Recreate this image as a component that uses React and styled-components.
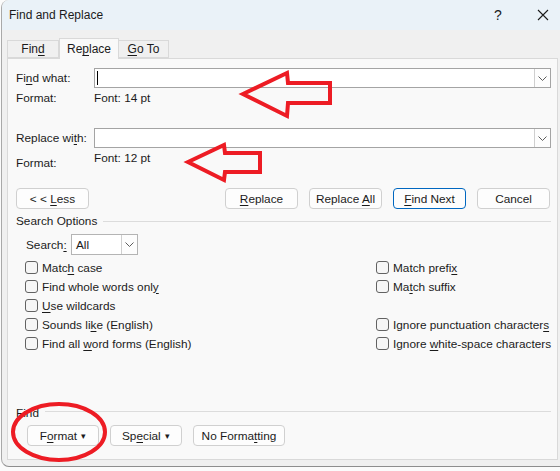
import React from "react";
import styled, { createGlobalStyle } from "styled-components";

const GlobalStyle = createGlobalStyle`
  body {
    margin: 0;
    background: #fbfbfb;
    font-family: "Liberation Sans", Arial, sans-serif;
    font-size: 11.8px;
    color: #1b1b1b;
  }
  u {
    text-decoration: underline;
    text-underline-offset: 2px;
  }
`;

const leftOptions = [
  <>Matc<u>h</u> case</>,
  <>Find whole words onl<u>y</u></>,
  <><u>U</u>se wildcards</>,
  <>Sounds li<u>k</u>e (English)</>,
  <>Find all <u>w</u>ord forms (English)</>,
];

const rightOptions = [
  <>Match prefi<u>x</u></>,
  <>Ma<u>t</u>ch suffix</>,
  null,
  <>Ignore punctuation character<u>s</u></>,
  <>Ignore <u>w</u>hite-space characters</>,
];

const Chevron = () => (
  <svg width="9" height="5" viewBox="0 0 9 5">
    <path d="M0.5 0.5 L4.5 4.5 L8.5 0.5" fill="none" stroke="#5c5c5c" strokeWidth="1" />
  </svg>
);

const Check = ({ children }) => (
  <CheckRow>
    <Box />
    <span>{children}</span>
  </CheckRow>
);

const Btn = ({ children, ...rest }) => (
  <Button {...rest}>
    <span>{children}</span>
  </Button>
);

const App = () => {
  return (
    <>
      <GlobalStyle />
      <Window>
        <TitleBar>
          <Title>Find and Replace</Title>
          <Caption>?</Caption>
          <Caption $close>
            <svg width="12" height="12" viewBox="0 0 12 12">
              <path d="M1 1 L11 11 M11 1 L1 11" stroke="#1b1b1b" strokeWidth="1.1" />
            </svg>
          </Caption>
        </TitleBar>

        <Tabs>
          <Tab $w={52}><span>Fin<u>d</u></span></Tab>
          <Tab $w={60} $active><span>Re<u>p</u>lace</span></Tab>
          <Tab $w={50}><span><u>G</u>o To</span></Tab>
        </Tabs>

        <Panel>
          <FieldRow>
            <Label>Fi<u>n</u>d what:</Label>
            <Combo>
              <Caret />
              <DropButton><Chevron /></DropButton>
            </Combo>
          </FieldRow>
          <FormatRow>
            <Label>Format:</Label>
            <span>Font: 14 pt</span>
          </FormatRow>

          <FieldRow $top={22}>
            <Label>Replace wi<u>t</u>h:</Label>
            <Combo>
              <DropButton><Chevron /></DropButton>
            </Combo>
          </FieldRow>
          <FormatRow>
            <Label $drop={5}>Format:</Label>
            <span>Font: 12 pt</span>
          </FormatRow>

          <ButtonRow>
            <Btn $w={73}>&lt; &lt; <u>L</u>ess</Btn>
            <ButtonGroup>
              <Btn $w={73}><u>R</u>eplace</Btn>
              <Btn $w={73}>Replace <u>A</u>ll</Btn>
              <Btn $w={73} $primary><u>F</u>ind Next</Btn>
              <Btn $w={73}>Cancel</Btn>
            </ButtonGroup>
          </ButtonRow>

          <Section>Search Options</Section>

          <SearchRow>
            <SearchLabel>Search<u>:</u></SearchLabel>
            <Select>
              <span>All</span>
              <DropButton $h={21}><Chevron /></DropButton>
            </Select>
          </SearchRow>

          <Options>
            {leftOptions.map((opt, i) => (
              <React.Fragment key={i}>
                <Check>{opt}</Check>
                {rightOptions[i] ? <Check>{rightOptions[i]}</Check> : <span />}
              </React.Fragment>
            ))}
          </Options>

          <Bottom>
            <Section $short>Find</Section>
            <BottomButtons>
              <Btn $w={72}>F<u>o</u>rmat <Tri>▾</Tri></Btn>
              <Btn $w={72}>Sp<u>e</u>cial <Tri>▾</Tri></Btn>
              <Btn $w={92}>No Forma<u>t</u>ting</Btn>
            </BottomButtons>
          </Bottom>
        </Panel>

        <Marks viewBox="0 0 560 471" width="560" height="471">
          <polygon
            points="243,94 287,73 288,83 330,83 330,103 288,103 287,116"
            fill="none"
            stroke="#ed1c24"
            strokeWidth="4"
            strokeLinejoin="miter"
          />
          <polygon
            points="188,162 224,145 225,153 260,153 260,172 225,172 224,180"
            fill="none"
            stroke="#ed1c24"
            strokeWidth="4"
            strokeLinejoin="miter"
          />
          <ellipse cx="59" cy="432" rx="46" ry="28" fill="none" stroke="#ed1c24" strokeWidth="4" />
        </Marks>
      </Window>
    </>
  );
};

export default App;

const Window = styled.div`
  position: relative;
  width: 559px;
  height: 467px;
  margin-left: 1px;
  background: #f0f0f0;
  border-left: 1px solid #a9a9a9;
  border-bottom: 1px solid #8e8e8e;
  border-radius: 8px 0 0 8px;
  overflow: hidden;
  box-sizing: border-box;
  display: flex;
  flex-direction: column;
`;

const TitleBar = styled.div`
  height: 30px;
  flex-shrink: 0;
  display: flex;
  align-items: center;
  background: #eaf2f8;
  margin-left: -2px;
  font-size: 12px;
`;

const Title = styled.div`
  padding-left: 9px;
  flex: 1;
`;

const Caption = styled.div`
  width: 34px;
  height: 30px;
  display: flex;
  align-items: center;
  justify-content: center;
  font-size: 14px;
  margin-right: ${(p) => (p.$close ? "0" : "11px")};
`;

const Tabs = styled.div`
  height: 28px;
  display: flex;
  align-items: flex-end;
  padding-left: 5px;
  flex-shrink: 0;
  font-size: 12px;
`;

const Tab = styled.div`
  width: ${(p) => p.$w}px;
  height: ${(p) => (p.$active ? 21 : 18)}px;
  margin-bottom: ${(p) => (p.$active ? -1 : 0)}px;
  box-sizing: border-box;
  display: flex;
  align-items: center;
  justify-content: center;
  background: ${(p) => (p.$active ? "#f9f9f9" : "#f0f0f0")};
  border: 1px solid #d9d9d9;
  border-bottom: ${(p) => (p.$active ? "none" : "1px solid #d9d9d9")};
  border-left: ${(p) => (p.$active ? "1px solid #d9d9d9" : "none")};
  z-index: ${(p) => (p.$active ? 1 : 0)};
  &:first-child {
    border-left: 1px solid #d9d9d9;
  }
`;

const Panel = styled.div`
  margin-left: 5px;
  width: 551px;
  height: 402px;
  box-sizing: border-box;
  background: #f9f9f9;
  border: 1px solid #d9d9d9;
  padding: 9px 6px 13px 8px;
  display: flex;
  flex-direction: column;
`;

const FieldRow = styled.div`
  display: grid;
  grid-template-columns: 78px 1fr;
  align-items: center;
  margin-top: ${(p) => p.$top || 0}px;
`;

const Label = styled.div`
  margin-top: ${(p) => p.$drop || 0}px;
`;

const Combo = styled.div`
  height: 20px;
  box-sizing: border-box;
  background: #ffffff;
  border: 1px solid #a4a4a4;
  display: flex;
  align-items: center;
`;

const Caret = styled.span`
  width: 1px;
  height: 14px;
  background: #000;
  margin-left: 2px;
`;

const DropButton = styled.div`
  margin-left: auto;
  width: 16px;
  height: ${(p) => (p.$h ? p.$h - 2 : 18)}px;
  box-sizing: border-box;
  border-left: 1px solid #cfcfcf;
  background: #fdfdfd;
  display: flex;
  align-items: center;
  justify-content: center;
`;

const FormatRow = styled.div`
  display: grid;
  grid-template-columns: 78px 1fr;
  align-items: start;
  line-height: 16px;
  margin-top: 2px;
`;

const ButtonRow = styled.div`
  display: flex;
  margin-top: 17px;
  padding-right: 1px;
`;

const ButtonGroup = styled.div`
  margin-left: auto;
  display: flex;
  gap: 11px;
`;

const Button = styled.div`
  width: ${(p) => p.$w}px;
  height: 21px;
  box-sizing: border-box;
  display: flex;
  align-items: center;
  justify-content: center;
  background: #fdfdfd;
  border: 1px solid ${(p) => (p.$primary ? "#0067c0" : "#d0d0d0")};
  border-radius: 4px;
  white-space: nowrap;
`;

const Tri = styled.span`
  font-size: 9px;
  margin-left: 1px;
  vertical-align: 1px;
`;

const Section = styled.div`
  display: flex;
  align-items: center;
  height: 16px;
  margin-top: 4px;
  &::after {
    content: "";
    flex: 1;
    border-top: 1px solid #dcdcdc;
    margin-left: 6px;
    margin-top: ${(p) => (p.$short ? "-4px" : "0")};
  }
`;

const SearchRow = styled.div`
  display: flex;
  align-items: center;
  margin-top: 5px;
  padding-left: 10px;
`;

const SearchLabel = styled.div`
  width: 45px;
`;

const Select = styled.div`
  width: 67px;
  height: 21px;
  box-sizing: border-box;
  background: #ffffff;
  border: 1px solid #b4b4b4;
  display: flex;
  align-items: center;
  padding-left: 4px;
`;

const Options = styled.div`
  display: grid;
  grid-template-columns: 351px 1fr;
  grid-auto-rows: 19px;
  margin-top: 3px;
  padding-left: 9px;
`;

const CheckRow = styled.div`
  display: flex;
  align-items: center;
  gap: 4px;
  white-space: nowrap;
`;

const Box = styled.span`
  width: 13px;
  height: 13px;
  box-sizing: border-box;
  border: 1px solid #626262;
  border-radius: 3px;
  background: #f6f6f6;
  flex-shrink: 0;
`;

const Bottom = styled.div`
  margin-top: auto;
`;

const BottomButtons = styled.div`
  display: flex;
  gap: 11px;
  margin-top: 4px;
  padding-left: 11px;
`;

const Marks = styled.svg`
  position: absolute;
  top: 0;
  left: -2px;
  pointer-events: none;
  overflow: visible;
`;
